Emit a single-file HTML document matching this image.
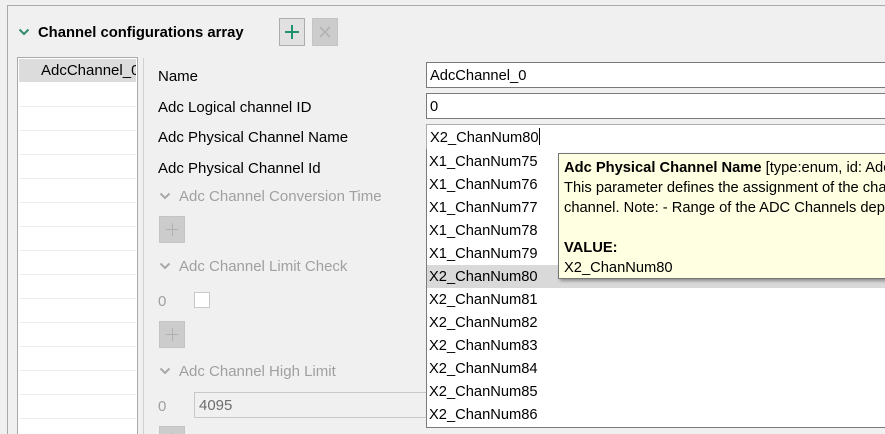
<!DOCTYPE html>
<html><head><meta charset="utf-8"><style>
*{box-sizing:border-box;margin:0;padding:0}
html,body{width:885px;height:434px;overflow:hidden}
body{background:#f0f0f0;font-family:"Liberation Sans",sans-serif;font-size:15px;color:#000;position:relative}
.a{position:absolute;white-space:nowrap}
.lbl{line-height:20px}
.inp{position:absolute;left:426px;width:470px;height:26px;background:#fff;border:1px solid #7a7a7a;padding-left:3px;line-height:26px;font-size:14.7px}
.gray{color:#a0a0a0}
.pb{position:absolute;width:26px;height:27px;background:#cccccc;border:1px solid #c4c4c4}
.pb:before,.pb:after{content:"";position:absolute;background:#b0b0b0}
.pb:before{left:6px;top:12px;width:12px;height:1px}
.pb:after{left:12px;top:6px;width:1px;height:13px}
.row{position:absolute;left:19px;width:117px;height:1px;background:#ececec}
.dd{position:absolute;left:426px;top:149px;width:470px;height:279px;background:#fff;border:1px solid #7a7a7a;border-top:none;font-size:14.7px;padding-top:1px}
.it{height:23px;line-height:25px;padding-left:2px}
</style></head><body>
<div class="a" style="left:7px;top:5px;width:878px;height:429px;border-top:1px solid #a9a9a9;border-left:1px solid #a9a9a9"></div>
<svg class="a" style="left:18px;top:27px" width="12" height="10"><path d="M1.5 2.5 L6 7 L10.5 2.5" stroke="#2e8b6e" stroke-width="2" fill="none"/></svg>
<div class="a" style="left:38px;top:23px;font-weight:bold;font-size:14.8px;line-height:20px">Channel configurations array</div>
<div class="a" style="left:279px;top:18px;width:26px;height:28px;background:#e1e1e1;border:1px solid #adadad"></div>
<svg class="a" style="left:279px;top:18px" width="26" height="28"><path d="M13 7V21M6 14H20" stroke="#22916f" stroke-width="2"/></svg>
<div class="a" style="left:312px;top:18px;width:26px;height:28px;background:#cccccc;border:1px solid #c4c4c4"></div>
<svg class="a" style="left:312px;top:18px" width="26" height="28"><path d="M8 9L18 19M18 9L8 19" stroke="#b3b3b3" stroke-width="1.6"/></svg>

<div class="a" style="left:17px;top:57px;width:121px;height:390px;background:#fff;border:1px solid #a9a9a9"></div>
<div class="a" style="left:19px;top:59px;width:117px;height:23px;background:#dcdcdc"></div>
<div class="a" style="left:41px;top:62px;width:95px;overflow:hidden;line-height:18px">AdcChannel_0</div>
<div class="row" style="top:106px"></div><div class="row" style="top:130px"></div><div class="row" style="top:154px"></div><div class="row" style="top:178px"></div><div class="row" style="top:202px"></div><div class="row" style="top:226px"></div><div class="row" style="top:250px"></div><div class="row" style="top:274px"></div><div class="row" style="top:298px"></div><div class="row" style="top:322px"></div><div class="row" style="top:346px"></div><div class="row" style="top:370px"></div><div class="row" style="top:394px"></div><div class="row" style="top:418px"></div>
<div class="a" style="left:143px;top:58px;width:1px;height:380px;background:#d0d0d0"></div>

<div class="a lbl" style="left:158px;top:67px">Name</div>
<div class="a lbl" style="left:158px;top:98px">Adc Logical channel ID</div>
<div class="a lbl" style="left:158px;top:128px">Adc Physical Channel Name</div>
<div class="a lbl" style="left:158px;top:159px">Adc Physical Channel Id</div>
<div class="inp" style="top:62px">AdcChannel_0</div>
<div class="inp" style="top:93px">0</div>
<div class="inp" style="top:124px;border-color:#adadad">X2_ChanNum80<span style="display:inline-block;width:1px;height:17px;background:#000;vertical-align:-3px"></span></div>

<svg class="a" style="left:159px;top:191px" width="12" height="10"><path d="M1.5 2.5 L6 7 L10.5 2.5" stroke="#a8a8a8" stroke-width="2" fill="none"/></svg>
<div class="a lbl gray" style="left:179px;top:187px">Adc Channel Conversion Time</div>
<div class="pb" style="left:159px;top:216px"></div>
<svg class="a" style="left:159px;top:261px" width="12" height="10"><path d="M1.5 2.5 L6 7 L10.5 2.5" stroke="#a8a8a8" stroke-width="2" fill="none"/></svg>
<div class="a lbl gray" style="left:179px;top:257px">Adc Channel Limit Check</div>
<div class="a lbl gray" style="left:158px;top:292px">0</div>
<div class="a" style="left:194px;top:292px;width:16px;height:16px;background:#fff;border:1px solid #c8c8c8"></div>
<div class="pb" style="left:159px;top:321px"></div>
<svg class="a" style="left:159px;top:366px" width="12" height="10"><path d="M1.5 2.5 L6 7 L10.5 2.5" stroke="#a8a8a8" stroke-width="2" fill="none"/></svg>
<div class="a lbl gray" style="left:179px;top:362px">Adc Channel High Limit</div>
<div class="a lbl gray" style="left:158px;top:397px">0</div>
<div class="a" style="left:194px;top:392px;width:240px;height:26px;border:1px solid #c8c8c8;background:#f0f0f0;color:#6d6d6d;padding-left:4px;line-height:26px">4095</div>
<div class="pb" style="left:159px;top:426px"></div>

<div class="dd">
<div class="it">X1_ChanNum75</div><div class="it">X1_ChanNum76</div><div class="it">X1_ChanNum77</div><div class="it">X1_ChanNum78</div><div class="it">X1_ChanNum79</div>
<div class="it" style="background:#d9d9d9">X2_ChanNum80</div>
<div class="it">X2_ChanNum81</div><div class="it">X2_ChanNum82</div><div class="it">X2_ChanNum83</div><div class="it">X2_ChanNum84</div><div class="it">X2_ChanNum85</div><div class="it">X2_ChanNum86</div>
</div>

<div class="a" style="left:558px;top:153px;width:340px;height:126px;background:#ffffe1;border:1px solid #767676;box-shadow:2px 2px 3px rgba(0,0,0,0.35);padding:4px 0 0 5px;line-height:20px;overflow:hidden;font-size:14.7px">
<div><b>Adc Physical Channel Name</b> [type:enum, id: AdcPhysicalChannelName]</div>
<div>This parameter defines the assignment of the channel</div>
<div>channel. Note: - Range of the ADC Channels depends</div>
<div>&nbsp;</div>
<div><b>VALUE:</b></div>
<div>X2_ChanNum80</div>
</div>
</body></html>
